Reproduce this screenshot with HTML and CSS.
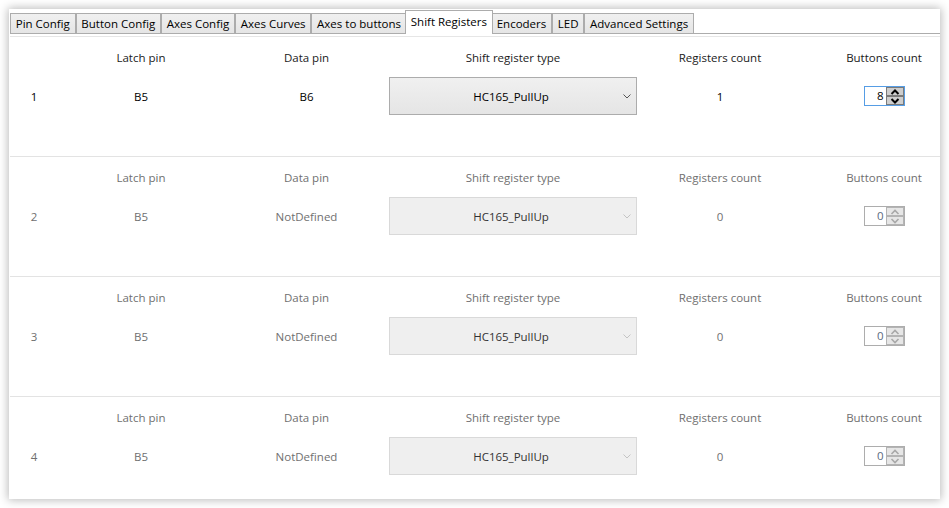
FILE: index.html
```html
<!DOCTYPE html>
<html>
<head>
<meta charset="utf-8">
<link rel="stylesheet" href="styles.css">
</head>
<body>
<div class="window">
  <div class="tabs">
    <div class="tab">Pin Config</div>
    <div class="tab">Button Config</div>
    <div class="tab">Axes Config</div>
    <div class="tab">Axes Curves</div>
    <div class="tab">Axes to buttons</div>
    <div class="tab selected">Shift Registers</div>
    <div class="tab">Encoders</div>
    <div class="tab">LED</div>
    <div class="tab">Advanced Settings</div>
  </div>
  <div class="content">
    <div class="row">
      <div class="h c0"></div>
      <div class="h">Latch pin</div>
      <div class="h">Data pin</div>
      <div class="h">Shift register type</div>
      <div class="h">Registers count</div>
      <div class="h last">Buttons count</div>
      <div class="v">1</div>
      <div class="v">B5</div>
      <div class="v">B6</div>
      <div class="v"><div class="combo"><span>HC165_PullUp</span><svg class="chev" width="8" height="5" viewBox="0 0 8 5"><polyline points="0.5,0.5 4,4 7.5,0.5" fill="none" stroke="#555" stroke-width="1"/></svg></div></div>
      <div class="v">1</div>
      <div class="v last"><div class="spin focus"><div class="spin-text">8</div><div class="spin-btns"><div class="sb"><svg width="10" height="6" viewBox="0 0 10 6"><polyline points="1.5,5 5,1.5 8.5,5" fill="none" stroke="#000" stroke-width="2"/></svg></div><div class="sb"><svg width="10" height="6" viewBox="0 0 10 6"><polyline points="1.5,1 5,4.5 8.5,1" fill="none" stroke="#000" stroke-width="2"/></svg></div></div></div></div>
    </div>
    <div class="row disabled">
      <div class="h c0"></div>
      <div class="h">Latch pin</div>
      <div class="h">Data pin</div>
      <div class="h">Shift register type</div>
      <div class="h">Registers count</div>
      <div class="h last">Buttons count</div>
      <div class="v">2</div>
      <div class="v">B5</div>
      <div class="v">NotDefined</div>
      <div class="v"><div class="combo"><span>HC165_PullUp</span><svg class="chev" width="8" height="5" viewBox="0 0 8 5"><polyline points="0.5,0.5 4,4 7.5,0.5" fill="none" stroke="#c4c4c4" stroke-width="1"/></svg></div></div>
      <div class="v">0</div>
      <div class="v last"><div class="spin"><div class="spin-text">0</div><div class="spin-btns"><div class="sb"><svg width="10" height="6" viewBox="0 0 10 6"><polyline points="1.5,5 5,1.5 8.5,5" fill="none" stroke="#a8a8a8" stroke-width="1.6"/></svg></div><div class="sb"><svg width="10" height="6" viewBox="0 0 10 6"><polyline points="1.5,1 5,4.5 8.5,1" fill="none" stroke="#a8a8a8" stroke-width="1.6"/></svg></div></div></div></div>
    </div>
    <div class="row disabled">
      <div class="h c0"></div>
      <div class="h">Latch pin</div>
      <div class="h">Data pin</div>
      <div class="h">Shift register type</div>
      <div class="h">Registers count</div>
      <div class="h last">Buttons count</div>
      <div class="v">3</div>
      <div class="v">B5</div>
      <div class="v">NotDefined</div>
      <div class="v"><div class="combo"><span>HC165_PullUp</span><svg class="chev" width="8" height="5" viewBox="0 0 8 5"><polyline points="0.5,0.5 4,4 7.5,0.5" fill="none" stroke="#c4c4c4" stroke-width="1"/></svg></div></div>
      <div class="v">0</div>
      <div class="v last"><div class="spin"><div class="spin-text">0</div><div class="spin-btns"><div class="sb"><svg width="10" height="6" viewBox="0 0 10 6"><polyline points="1.5,5 5,1.5 8.5,5" fill="none" stroke="#a8a8a8" stroke-width="1.6"/></svg></div><div class="sb"><svg width="10" height="6" viewBox="0 0 10 6"><polyline points="1.5,1 5,4.5 8.5,1" fill="none" stroke="#a8a8a8" stroke-width="1.6"/></svg></div></div></div></div>
    </div>
    <div class="row disabled">
      <div class="h c0"></div>
      <div class="h">Latch pin</div>
      <div class="h">Data pin</div>
      <div class="h">Shift register type</div>
      <div class="h">Registers count</div>
      <div class="h last">Buttons count</div>
      <div class="v">4</div>
      <div class="v">B5</div>
      <div class="v">NotDefined</div>
      <div class="v"><div class="combo"><span>HC165_PullUp</span><svg class="chev" width="8" height="5" viewBox="0 0 8 5"><polyline points="0.5,0.5 4,4 7.5,0.5" fill="none" stroke="#c4c4c4" stroke-width="1"/></svg></div></div>
      <div class="v">0</div>
      <div class="v last"><div class="spin"><div class="spin-text">0</div><div class="spin-btns"><div class="sb"><svg width="10" height="6" viewBox="0 0 10 6"><polyline points="1.5,5 5,1.5 8.5,5" fill="none" stroke="#a8a8a8" stroke-width="1.6"/></svg></div><div class="sb"><svg width="10" height="6" viewBox="0 0 10 6"><polyline points="1.5,1 5,4.5 8.5,1" fill="none" stroke="#a8a8a8" stroke-width="1.6"/></svg></div></div></div></div>
    </div>
  </div>
</div>
</body>
</html>
```
FILE: styles.css
```css
html, body {
  margin: 0;
  padding: 0;
  background: #ffffff;
}
body {
  font-family: "Segoe UI", "Open Sans", "Noto Sans", sans-serif;
  font-size: 11.5px;
  color: #1a1a1a;
  padding: 9px 0 0 9px;
  height: 508px;
  box-sizing: border-box;
  overflow: hidden;
}
.window {
  width: 931px;
  height: 490px;
  background: #ffffff;
  box-shadow: 0 0 9px 1px rgba(0, 0, 0, 0.28);
  overflow: hidden;
  padding-left: 1px;
  box-sizing: border-box;
}
.tabs {
  display: flex;
  align-items: flex-end;
  height: 25px;
  border-bottom: 1px solid #acacac;
  box-sizing: border-box;
}
.tab {
  height: 20px;
  line-height: 19px;
  padding: 0 4.75px;
  border: 1px solid #acacac;
  border-bottom: none;
  background: linear-gradient(#f0f0f0, #e5e5e5);
  box-sizing: border-box;
  white-space: nowrap;
  color: #000;
}
.tab.selected {
  height: 24px;
  line-height: 22px;
  margin: 0 -2px -1px -2px;
  padding: 0 5px;
  background: #ffffff;
  position: relative;
  z-index: 1;
}
.content {
  margin-top: 2px;
  border-top: 1px solid #e6e6e6;
}
.row {
  display: grid;
  grid-template-columns: 48px 166px 165px 248px 166px 136px;
  grid-template-rows: 18px 38px;
  row-gap: 10px;
  padding: 12px 0 41px 0;
  border-bottom: 1px solid #e3e3e3;
  height: 120px;
  box-sizing: border-box;
}
.h {
  text-align: center;
  line-height: 18px;
  color: #1a1a1a;
  white-space: nowrap;
}
.v {
  display: flex;
  align-items: center;
  justify-content: center;
  color: #000;
  white-space: nowrap;
}
.last {
  padding-left: 26px;
}
.combo {
  width: 248px;
  height: 38px;
  box-sizing: border-box;
  border: 1px solid #acacac;
  background: linear-gradient(#f0f0f0, #e5e5e5);
  display: flex;
  align-items: center;
  justify-content: center;
  position: relative;
  color: #000;
}
.combo span {
  margin-left: -4px;
}
.chev {
  position: absolute;
  right: 5px;
  top: 16px;
}
.spin {
  display: flex;
  width: 41px;
  height: 20px;
  box-sizing: border-box;
  border: 1px solid #abadb3;
  background: #fff;
}
.spin.focus {
  border-color: #569de5;
}
.spin-text {
  flex: 1;
  text-align: right;
  line-height: 18px;
  padding-right: 2px;
}
.spin-btns {
  width: 18px;
  display: flex;
  flex-direction: column;
}
.sb {
  flex: 1;
  background: #cdcdcd;
  border: 1px solid #7a7a7a;
  box-sizing: border-box;
  display: flex;
  align-items: center;
  justify-content: center;
}
.sb svg {
  display: block;
}
.disabled .h,
.disabled .v {
  color: #707070;
}
.disabled .combo {
  border-color: #d9d9d9;
  background: #efefef;
  color: #333;
}
.disabled .spin {
  border-color: #adadad;
}
.disabled .spin-text {
  color: #5a6a80;
}
.disabled .sb {
  background: #e6e6e6;
  border-color: #b4b4b4;
}
```
